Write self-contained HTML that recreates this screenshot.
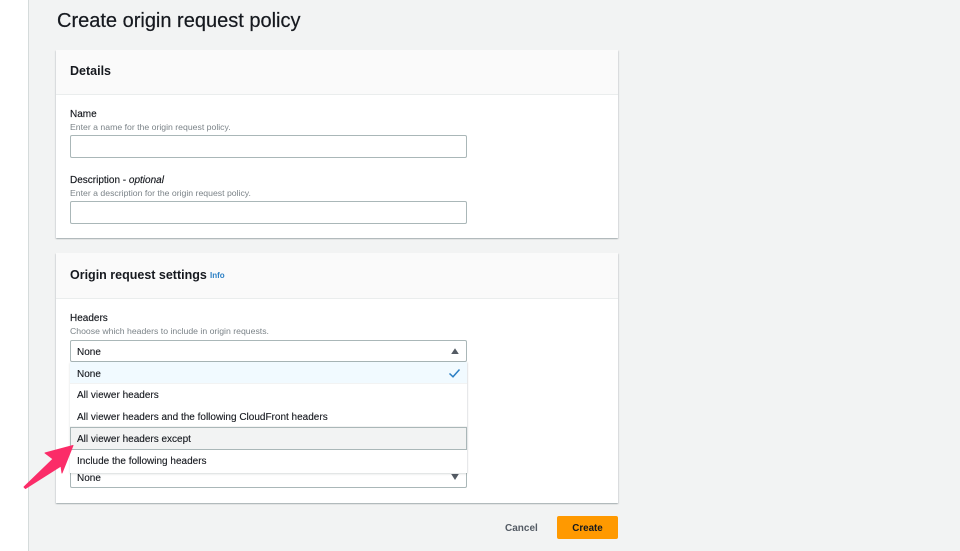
<!DOCTYPE html>
<html><head><meta charset="utf-8">
<style>
html,body{margin:0;padding:0;background:#fff}
#p{position:relative;width:960px;height:551px;overflow:hidden;background:#fff;font-family:"Liberation Sans",sans-serif;color:#16191f;filter:blur(.25px)}
#p div{position:absolute;box-sizing:border-box;white-space:nowrap}
.t{line-height:14px;font-size:10px;color:#16191f;-webkit-text-stroke:.15px #16191f}
.s{line-height:10px;font-size:8.7px;color:#7b8388}
.h{line-height:16px;font-size:12.5px;font-weight:bold;color:#16191f}
.card{background:#fff;left:56px;width:562px;box-shadow:0 1px 1px rgba(0,28,36,.2),1px 1px 1px rgba(0,28,36,.08),-1px 1px 1px rgba(0,28,36,.08)}
.ch{left:0;top:0;width:562px;background:#fafafa;border-bottom:1px solid #eaeded}
.inp{left:70px;width:397px;height:23px;background:#fff;border:1px solid #aab7b8;border-radius:2px}
.o{left:70px;width:397px;height:22px;background:#fff;font-size:10px;line-height:25px;padding-left:7px;color:#16191f;border-bottom:1px solid #f2f3f3;-webkit-text-stroke:.12px #16191f;overflow:hidden}
</style></head><body>
<div id="p">
<div style="left:28px;top:0;width:932px;height:551px;background:#f2f3f3;border-left:1px solid #d5dbdb"></div>
<div style="left:57px;top:9px;font-size:20px;line-height:24px;color:#16191f;-webkit-text-stroke:.2px #16191f">Create origin request policy</div>

<div class="card" style="top:50px;height:188px"><div class="ch" style="height:45px"></div></div>
<div class="h" style="left:70px;top:63px">Details</div>
<div class="t" style="left:70px;top:108px">Name</div>
<div class="s" style="left:70px;top:122px">Enter a name for the origin request policy.</div>
<div class="inp" style="top:135px"></div>
<div class="t" style="left:70px;top:174px">Description - <i>optional</i></div>
<div class="s" style="left:70px;top:188px">Enter a description for the origin request policy.</div>
<div class="inp" style="top:201px"></div>

<div class="card" style="top:253px;height:250px"><div class="ch" style="height:46px"></div></div>
<div class="h" style="left:70px;top:267px">Origin request settings</div>
<div style="left:210px;top:270px;font-size:8px;line-height:11px;font-weight:bold;color:#2b7fc4">Info</div>
<div class="t" style="left:70px;top:312px">Headers</div>
<div class="s" style="left:70px;top:326px">Choose which headers to include in origin requests.</div>
<div class="inp" style="top:340px;height:22px;font-size:10px;line-height:23px;padding-left:6px;-webkit-text-stroke:.12px #16191f">None</div>
<svg style="position:absolute;left:450px;top:347px" width="10" height="8"><path d="M5 1.2L8.8 7H1.2Z" fill="#545b64"/></svg>

<div class="inp" style="top:466px;height:22px;font-size:10px;line-height:23px;padding-left:6px;-webkit-text-stroke:.12px #16191f">None</div>
<svg style="position:absolute;left:450px;top:473px" width="10" height="8"><path d="M1.2 1H8.8L5 7Z" fill="#545b64"/></svg>

<div style="left:70px;top:362px;width:397px;height:111px;box-shadow:0 1px 2px rgba(0,28,36,.15),1px 0 1px rgba(0,28,36,.06)"></div>
<div class="o" style="top:362px;background:#f1faff">None</div>
<svg style="position:absolute;left:448px;top:367px" width="13" height="12"><path d="M1.5 6.5L5 9.8L11.5 2.5" fill="none" stroke="#2b7fc4" stroke-width="1.5"/></svg>
<div class="o" style="top:384px;line-height:23px">All viewer headers</div>
<div class="o" style="top:405px;line-height:25px">All viewer headers and the following CloudFront headers</div>
<div class="o" style="top:427px;height:23px;background:#f2f3f3;border:1px solid #aab7b8;padding-left:6px;line-height:23px">All viewer headers except</div>
<div class="o" style="top:450px;height:23px;border-bottom:0;line-height:23px">Include the following headers</div>

<svg style="position:absolute;left:0;top:0" width="100" height="500"><path d="M73 445.5L45 453L53 459L24 487L25.5 488.5L61 466L62 473Z" fill="#fb2c68" stroke="#fb2c68" stroke-width="1" stroke-linejoin="round"/></svg>

<div style="left:505px;top:522px;font-size:10px;line-height:14px;font-weight:bold;color:#545b64">Cancel</div>
<div style="left:557px;top:516px;width:61px;height:23px;background:#f90;border-radius:2px;font-size:9.8px;line-height:25px;font-weight:bold;text-align:center;color:#16191f">Create</div>
</div>
</body></html>
